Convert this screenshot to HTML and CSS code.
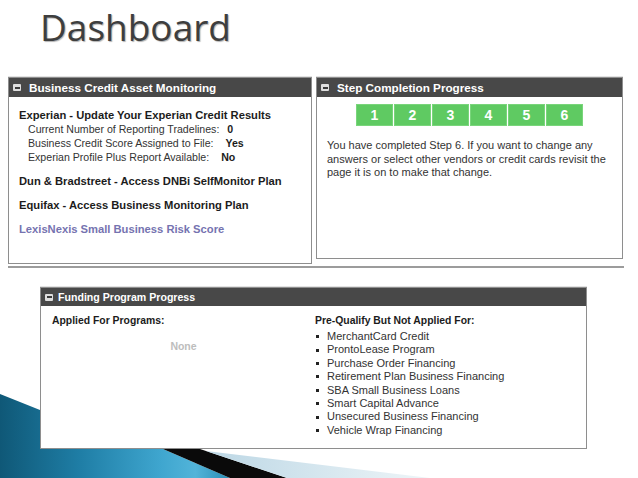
FILE: index.html
```html
<!DOCTYPE html>
<html lang="en">
<head>
<meta charset="utf-8">
<title>Dashboard</title>
<link rel="stylesheet" href="styles.css">
</head>
<body>
<svg class="slide-deco" width="440" height="100" viewBox="0 0 440 100" aria-hidden="true">
  <defs>
    <linearGradient id="blueGrad" x1="0" y1="0" x2="1" y2="0">
      <stop offset="0" stop-color="#0f5877"/>
      <stop offset="0.35" stop-color="#1f7ea6"/>
      <stop offset="0.7" stop-color="#3fa6cf"/>
      <stop offset="0.85" stop-color="#52b4d9"/>
      <stop offset="1" stop-color="#2a8db4"/>
    </linearGradient>
    <linearGradient id="paleGrad" x1="0" y1="0" x2="1" y2="0">
      <stop offset="0" stop-color="#bcd7e5"/>
      <stop offset="1" stop-color="#eef5f8"/>
    </linearGradient>
  </defs>
  <polygon points="0,16 40,32 150,65 163,71 230,100 0,100" fill="url(#blueGrad)"/>
  <polygon points="150,65 185,66 200,71 287,100 230,100 163,71" fill="#0a0a0a"/>
  <polygon points="206,73 430,100 287,100" fill="url(#paleGrad)"/>
</svg>

<h1 class="title">Dashboard</h1>

<div class="top-row">
  <section class="panel panel-credit">
    <header class="panel-head"><span class="toggle"></span>Business Credit Asset Monitoring</header>
    <div class="credit-body">
      <div class="bureau-title">Experian - Update Your Experian Credit Results</div>
      <div class="stats">
        <div class="stat">Current Number of Reporting Tradelines: <b>0</b></div>
        <div class="stat">Business Credit Score Assigned to File: <b class="wide">Yes</b></div>
        <div class="stat">Experian Profile Plus Report Available: <b class="wide">No</b></div>
      </div>
      <div class="bureau-title spaced">Dun &amp; Bradstreet - Access DNBi SelfMonitor Plan</div>
      <div class="bureau-title spaced">Equifax - Access Business Monitoring Plan</div>
      <div class="bureau-title spaced link">LexisNexis Small Business Risk Score</div>
    </div>
  </section>

  <section class="panel panel-steps">
    <header class="panel-head"><span class="toggle"></span>Step Completion Progress</header>
    <div class="steps">
      <span class="step">1</span>
      <span class="step">2</span>
      <span class="step">3</span>
      <span class="step">4</span>
      <span class="step">5</span>
      <span class="step">6</span>
    </div>
    <p class="steps-note">You have completed Step 6. If you want to change any answers or select other vendors or credit cards revisit the page it is on to make that change.</p>
  </section>
</div>

<section class="panel funding">
  <header class="panel-head small"><span class="toggle"></span>Funding Program Progress</header>
  <div class="funding-body">
    <div class="col">
      <div class="col-title">Applied For Programs:</div>
      <div class="none">None</div>
    </div>
    <div class="col">
      <div class="col-title">Pre-Qualify But Not Applied For:</div>
      <ul class="programs">
        <li>MerchantCard Credit</li>
        <li>ProntoLease Program</li>
        <li>Purchase Order Financing</li>
        <li>Retirement Plan Business Financing</li>
        <li>SBA Small Business Loans</li>
        <li>Smart Capital Advance</li>
        <li>Unsecured Business Financing</li>
        <li>Vehicle Wrap Financing</li>
      </ul>
    </div>
  </div>
</section>
</body>
</html>
```

FILE: styles.css
```css
* { box-sizing: border-box; }

html, body { margin: 0; padding: 0; }

body {
  position: relative;
  width: 638px;
  height: 478px;
  overflow: hidden;
  background: #ffffff;
  font-family: "Liberation Sans", Arial, sans-serif;
  font-size: 11px;
  color: #333333;
}

.slide-deco {
  position: absolute;
  left: 0;
  bottom: 0;
  z-index: 0;
  display: block;
}

.title {
  margin: 0 0 25px 40px;
  padding-top: 2px;
  font-family: "Open Sans", "DejaVu Sans", sans-serif;
  font-weight: 400;
  font-size: 37px;
  line-height: 50px;
  color: #3e3e3e;
  text-shadow: 1px 1px 1px rgba(0, 0, 0, 0.3);
}

.top-row {
  display: flex;
  align-items: flex-start;
  gap: 4px;
  width: 616px;
  margin-left: 8px;
  padding-bottom: 2px;
  border-bottom: 2px solid #9c9c9c;
}

.panel {
  border: 1px solid #8e8e8e;
  background: #ffffff;
  box-shadow: 0 -1px 0 #e2e2e2;
}

.panel-credit { width: 304px; height: 187px; }
.panel-steps { width: 307px; height: 182px; }

.panel-head {
  display: flex;
  align-items: center;
  gap: 8px;
  height: 19px;
  padding-left: 4px;
  background: #484848;
  color: #ffffff;
  font-weight: bold;
  font-size: 11.7px;
  white-space: nowrap;
}

.panel-head.small {
  height: 18px;
  gap: 5px;
  font-size: 10.6px;
}

.toggle {
  display: flex;
  align-items: center;
  justify-content: center;
  width: 8px;
  height: 7px;
  background: #dedede;
  border-radius: 1px;
}

.toggle::before {
  content: "";
  width: 5px;
  height: 2px;
  background: #3a3a3a;
}

/* Business credit panel */
.credit-body {
  padding: 11px 10px 0 10px;
  line-height: 14px;
}

.bureau-title {
  font-weight: bold;
  font-size: 11.2px;
  color: #1c1c1c;
  white-space: nowrap;
}

.bureau-title.spaced { margin-top: 10px; }
.bureau-title.link { color: #7573b0; }

.stat {
  padding-left: 9px;
  font-size: 10.6px;
  color: #333333;
  white-space: nowrap;
}

.stat b {
  margin-left: 5px;
  color: #1c1c1c;
}

.stat b.wide { margin-left: 9px; }

/* Steps panel */
.steps {
  display: flex;
  justify-content: center;
  gap: 1px;
  margin-top: 7px;
}

.step {
  display: flex;
  align-items: center;
  justify-content: center;
  width: 37px;
  height: 22px;
  background: #5fca62;
  border: 1px solid #79d57b;
  color: #ffffff;
  font-weight: bold;
  font-size: 14px;
}

.steps-note {
  margin: 13px 0 0;
  padding: 0 7px 0 10px;
  font-size: 11px;
  line-height: 13.5px;
  color: #333333;
}

/* Funding panel */
.funding {
  position: relative;
  z-index: 1;
  width: 547px;
  height: 162px;
  margin: 19px 0 0 40px;
}

.funding-body {
  display: grid;
  grid-template-columns: 263px 1fr;
  padding: 8px 0 0 11px;
  line-height: 14px;
}

.col-title {
  font-weight: bold;
  font-size: 10.4px;
  color: #1c1c1c;
  white-space: nowrap;
}

.none {
  margin-top: 11px;
  text-align: center;
  font-weight: bold;
  font-size: 10.5px;
  color: #bdbdbd;
}

.programs {
  list-style: none;
  margin: 2px 0 0;
  padding: 0;
}

.programs li {
  display: flex;
  align-items: center;
  gap: 8px;
  line-height: 13.4px;
  font-size: 11px;
  color: #333333;
  white-space: nowrap;
}

.programs li::before {
  content: "";
  flex: none;
  width: 3px;
  height: 3px;
  margin-left: 1px;
  background: #222222;
}
```
